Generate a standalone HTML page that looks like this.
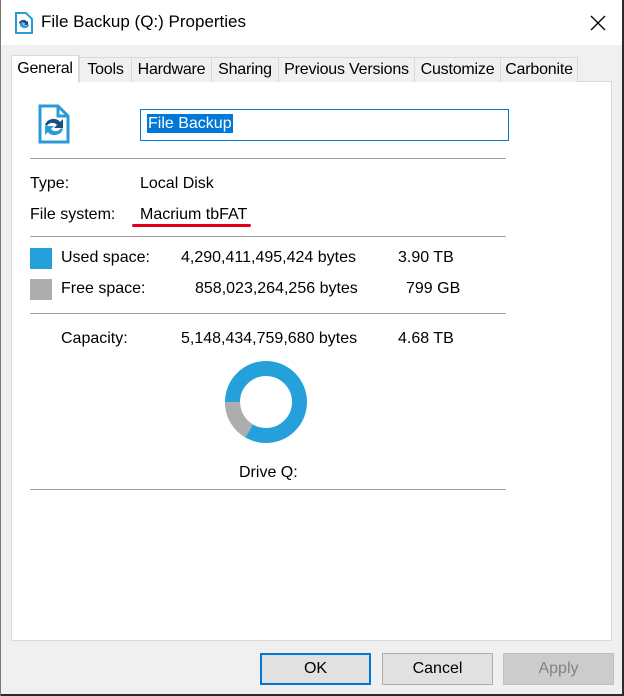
<!DOCTYPE html>
<html><head><style>
*{margin:0;padding:0;box-sizing:border-box}
body{width:624px;height:696px;background:#f0f0f0;font-family:"Liberation Sans",sans-serif;font-size:16px;color:#000;position:relative;overflow:hidden}
.a{position:absolute;white-space:nowrap}
.title{left:0;top:0;width:624px;height:45px;background:#fff}
.tab{position:absolute;top:57px;height:25px;border:1px solid #d9d9d9;border-bottom:none;background:#f0f0f0;text-align:center;line-height:24px;font-size:16px;letter-spacing:-0.2px}
.panel{left:11px;top:81px;width:601px;height:560px;background:#fff;border:1px solid #d9d9d9}
.hr{position:absolute;left:30px;width:476px;height:1px;background:#a0a0a0}
.btn{position:absolute;top:653px;width:111px;height:32px;border:1px solid #adadad;background:#e1e1e1;text-align:center;line-height:30px;font-size:16px}
</style></head><body>
<div class="a title"></div>
<svg class="a" style="left:15px;top:12px" width="18" height="22" viewBox="0 0 18 22"><path d="M1 1h10l6 6v14H1z" fill="#fff" stroke="#2b9bd8" stroke-width="2"/><path d="M4 11c1-4 7-4 8-1l1-1v4H9l1-1c-1-2-4-2-5 0z" fill="#1d4f7e"/><path d="M14 13c-1 4-7 4-8 1l-1 1v-4h4l-1 1c1 2 4 2 5 0z" fill="#2b9bd8"/></svg>
<div class="a" style="left:41px;top:12px;font-size:17px">File Backup (Q:) Properties</div>
<svg class="a" style="left:590px;top:15px" width="16" height="16"><path d="M1 1L15 15M15 1L1 15" stroke="#000" stroke-width="1.3"/></svg>
<div class="a panel"></div>
<div class="tab" style="left:79px;width:53px">Tools</div>
<div class="tab" style="left:131px;width:81px">Hardware</div>
<div class="tab" style="left:211px;width:68px">Sharing</div>
<div class="tab" style="left:278px;width:137px">Previous Versions</div>
<div class="tab" style="left:414px;width:87px">Customize</div>
<div class="tab" style="left:500px;width:78px">Carbonite</div>
<div class="tab" style="left:11px;top:55px;width:68px;height:28px;background:#fff;line-height:26px;border-color:#d9d9d9">General</div>
<svg class="a" style="left:38px;top:104px" width="32" height="40" viewBox="0 0 32 40"><path d="M2 2h18l10 10v26H2z" fill="#fff" stroke="#2b9bd8" stroke-width="3"/><path d="M20 2v10h10" fill="none" stroke="#2b9bd8" stroke-width="3"/><path d="M7 21c2-7 12-8 15-3l3-3v9h-9l3-3c-2-3-8-3-10 1z" fill="#1d4f7e"/><path d="M25 25c-2 7-12 8-15 3l-3 3v-9h9l-3 3c2 3 8 3 10-1z" fill="#2b9bd8"/></svg>
<div class="a" style="left:140px;top:109px;width:369px;height:32px;border:1px solid #0078d7"></div>
<div class="a" style="left:147px;top:114px;background:#0078d7;color:#fff;font-size:16px;line-height:19px;padding:0 1px">File Backup</div>
<div class="hr" style="top:158px"></div>
<div class="a" style="left:30px;top:175px">Type:</div>
<div class="a" style="left:140px;top:175px">Local Disk</div>
<div class="a" style="left:30px;top:206px">File system:</div>
<div class="a" style="left:140px;top:206px">Macrium tbFAT</div>
<div class="a" style="left:132px;top:224px;width:119px;height:3px;background:#e0001b;border-radius:2px"></div>
<div class="hr" style="top:236px"></div>
<div class="a" style="left:30px;top:248px;width:22px;height:21px;background:#26a0da"></div>
<div class="a" style="left:61px;top:249px">Used space:</div>
<div class="a" style="left:181px;top:249px">4,290,411,495,424 bytes</div>
<div class="a" style="left:398px;top:249px">3.90 TB</div>
<div class="a" style="left:30px;top:279px;width:22px;height:21px;background:#adadad"></div>
<div class="a" style="left:61px;top:280px">Free space:</div>
<div class="a" style="left:195px;top:280px">858,023,264,256 bytes</div>
<div class="a" style="left:406px;top:280px">799 GB</div>
<div class="hr" style="top:313px"></div>
<div class="a" style="left:61px;top:330px">Capacity:</div>
<div class="a" style="left:181px;top:330px">5,148,434,759,680 bytes</div>
<div class="a" style="left:398px;top:330px">4.68 TB</div>
<svg class="a" style="left:224px;top:360px" width="84" height="84" viewBox="0 0 84 84"><circle cx="42" cy="42" r="33.5" fill="none" stroke="#26a0da" stroke-width="15"/><circle cx="42" cy="42" r="33.5" fill="none" stroke="#adadad" stroke-width="15" stroke-dasharray="35.1 300" transform="rotate(120 42 42)"/></svg>
<div class="a" style="left:239px;top:464px">Drive Q:</div>
<div class="hr" style="top:489px"></div>
<div class="btn" style="left:260px;border:2px solid #0078d7;line-height:28px">OK</div>
<div class="btn" style="left:382px">Cancel</div>
<div class="btn" style="left:503px;background:#cccccc;border-color:#bfbfbf;color:#838383">Apply</div>
<div class="a" style="left:0;top:694px;width:624px;height:2px;background:#2b2b2b"></div>
<div class="a" style="left:622px;top:0;width:2px;height:696px;background:#2b2b2b"></div>
<div class="a" style="left:0;top:0;width:1px;height:696px;background:#777"></div>
</body></html>
